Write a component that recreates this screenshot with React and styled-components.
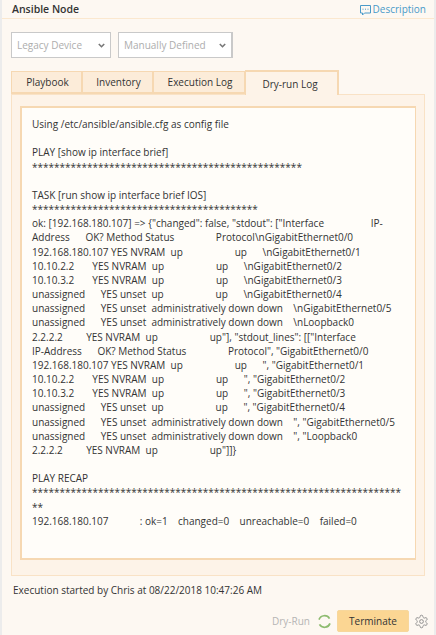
import React from "react";
import styled, { createGlobalStyle } from "styled-components";

const GlobalStyle = createGlobalStyle`
  html, body {
    margin: 0;
    padding: 0;
    background: #ececec;
  }
  * {
    box-sizing: border-box;
  }
`;

const Page = styled.div`
  width: 436px;
  height: 635px;
  padding: 0 2px;
  overflow: hidden;
  font-family: "Open Sans", "Liberation Sans", sans-serif;
  color: #2b2b2b;
`;

const Panel = styled.div`
  height: 100%;
  background: #fdf8f2;
  display: flex;
  flex-direction: column;
`;

const Header = styled.header`
  height: 19px;
  padding: 0 8px 0 10px;
  display: flex;
  justify-content: space-between;
  align-items: center;
  border-bottom: 1px solid #fbe8cf;
`;

const Title = styled.h1`
  margin: 0;
  font-size: 10.5px;
  font-weight: 600;
  color: #333;
`;

const DescriptionLink = styled.a`
  display: flex;
  align-items: center;
  gap: 2px;
  font-size: 10px;
  color: #4a9ac9;
`;

const Body = styled.div`
  padding: 13px 9px 0;
`;

const Filters = styled.div`
  display: flex;
  gap: 7px;
  margin-bottom: 13px;
`;

const SelectBox = styled.div`
  width: ${(props) => props.width}px;
  height: 26px;
  padding: 0 5px;
  display: flex;
  justify-content: space-between;
  align-items: center;
  background: #fff;
  border: 1px solid #c9c9c9;
  border-right-width: ${(props) => (props.$raised ? 2 : 1)}px;
  font-size: 10px;
  color: #adadad;
`;

const Tabs = styled.div`
  display: flex;
  height: 24px;
  align-items: flex-end;
  border-bottom: 1px solid #f9e2c6;
`;

const Tab = styled.div`
  width: ${(props) => props.width}px;
  height: ${(props) => (props.$active ? 25 : 23)}px;
  margin-bottom: ${(props) => (props.$active ? -1 : 0)}px;
  padding: ${(props) => (props.$active ? "0 3px 0 0" : "0 0 0 2px")};
  display: flex;
  justify-content: center;
  align-items: center;
  font-size: 10px;
  color: #333;
  background: ${(props) => (props.$active ? "#fdf3e8" : "#fcecd9")};
  border: 1px solid #f6d8b2;
  border-width: ${(props) => (props.$active ? "2px 2px 0 1px" : "1px 1px 2px 1px")};
`;

const TabPanel = styled.div`
  height: 481px;
  padding: 11px 8px 15px;
  background: #fdf3e8;
  border: 1px solid #f9e2c6;
  border-top: 0;
`;

const LogBox = styled.pre`
  height: 100%;
  margin: 0;
  padding: 9px 10px 0 10px;
  background: #fffdf9;
  border: 2px solid #f6d8b2;
  border-width: 2px 1px 2px 2px;
  font-family: inherit;
  font-size: 10px;
  line-height: 14.17px;
  color: #333;
  white-space: pre;
`;

const Status = styled.p`
  margin: 7px 0 0 2px;
  font-size: 10px;
  color: #333;
`;

const Footer = styled.footer`
  margin-top: auto;
  height: 28px;
  padding-right: 5px;
  display: flex;
  justify-content: flex-end;
  align-items: center;
`;

const Mode = styled.span`
  font-size: 10px;
  color: #b5b5b5;
  margin-right: 7px;
`;

const TerminateButton = styled.button`
  width: 72px;
  height: 22px;
  margin: 0 5px 0 5px;
  padding: 0;
  border: 1px solid #f7d79c;
  border-radius: 2px;
  background: #fbd693;
  font-family: inherit;
  font-size: 10px;
  color: #333;
`;

const Chevron = () => (
  <svg width="7" height="5" viewBox="0 0 7 5">
    <path d="M.8 1l2.7 2.7L6.2 1" fill="none" stroke="#777" strokeWidth="1.6" />
  </svg>
);

const CommentIcon = () => (
  <svg width="11" height="13" viewBox="0 0 11 13">
    <path d="M.5 2.5h10v7.5H4.5l-2 2V10h-2z" fill="none" stroke="#4a9ac9" strokeWidth="1" />
    <path d="M2.5 6.2h1M5 6.2h1M7.5 6.2h1" stroke="#4a9ac9" strokeWidth="1" />
  </svg>
);

const Spinner = () => (
  <svg width="15" height="15" viewBox="0 0 15 15">
    <path d="M2 5.6A5.8 5.8 0 0 1 12.5 4.6" fill="none" stroke="#8dbb6f" strokeWidth="1.7" />
    <path d="M13 9.4A5.8 5.8 0 0 1 2.5 10.4" fill="none" stroke="#8dbb6f" strokeWidth="1.7" />
  </svg>
);

const GearIcon = () => (
  <svg width="15" height="15" viewBox="0 0 24 24" fill="none" stroke="#8f8f8f" strokeWidth="1.6">
    <path d="M12.2 2h-.4a2 2 0 0 0-2 2v.2a2 2 0 0 1-1 1.7l-.4.3a2 2 0 0 1-2 0l-.2-.1a2 2 0 0 0-2.7.7l-.2.4a2 2 0 0 0 .7 2.7l.2.1a2 2 0 0 1 1 1.7v.6a2 2 0 0 1-1 1.7l-.2.1a2 2 0 0 0-.7 2.7l.2.4a2 2 0 0 0 2.7.7l.2-.1a2 2 0 0 1 2 0l.4.3a2 2 0 0 1 1 1.7v.2a2 2 0 0 0 2 2h.4a2 2 0 0 0 2-2v-.2a2 2 0 0 1 1-1.7l.4-.3a2 2 0 0 1 2 0l.2.1a2 2 0 0 0 2.7-.7l.2-.4a2 2 0 0 0-.7-2.7l-.2-.1a2 2 0 0 1-1-1.7v-.6a2 2 0 0 1 1-1.7l.2-.1a2 2 0 0 0 .7-2.7l-.2-.4a2 2 0 0 0-2.7-.7l-.2.1a2 2 0 0 1-2 0l-.4-.3a2 2 0 0 1-1-1.7V4a2 2 0 0 0-2-2z" />
    <circle cx="12" cy="12" r="3" />
  </svg>
);

const stars = (count) => "*".repeat(count);

// lines are broken where the reference log breaks them
const logText = `Using /etc/ansible/ansible.cfg as config file

PLAY [show ip interface brief]
${stars(49)}

TASK [run show ip interface brief IOS]
${stars(41)}
ok: [192.168.180.107] => {"changed": false, "stdout": ["Interface                  IP-
Address      OK? Method Status                Protocol\\nGigabitEthernet0/0
192.168.180.107 YES NVRAM  up                    up      \\nGigabitEthernet0/1
10.10.2.2       YES NVRAM  up                    up      \\nGigabitEthernet0/2
10.10.3.2       YES NVRAM  up                    up      \\nGigabitEthernet0/3
unassigned      YES unset  up                    up      \\nGigabitEthernet0/4
unassigned      YES unset  administratively down down    \\nGigabitEthernet0/5
unassigned      YES unset  administratively down down    \\nLoopback0
2.2.2.2         YES NVRAM  up                    up"], "stdout_lines": [["Interface
IP-Address      OK? Method Status                Protocol", "GigabitEthernet0/0
192.168.180.107 YES NVRAM  up                    up      ", "GigabitEthernet0/1
10.10.2.2       YES NVRAM  up                    up      ", "GigabitEthernet0/2
10.10.3.2       YES NVRAM  up                    up      ", "GigabitEthernet0/3
unassigned      YES unset  up                    up      ", "GigabitEthernet0/4
unassigned      YES unset  administratively down down    ", "GigabitEthernet0/5
unassigned      YES unset  administratively down down    ", "Loopback0
2.2.2.2         YES NVRAM  up                    up"]]}

PLAY RECAP
${stars(67)}
**
192.168.180.107            : ok=1    changed=0    unreachable=0    failed=0`;

const App = () => {
  return (
    <>
      <GlobalStyle />
      <Page>
        <Panel>
          <Header>
            <Title>Ansible Node</Title>
            <DescriptionLink>
              <CommentIcon />
              Description
            </DescriptionLink>
          </Header>
          <Body>
            <Filters>
              <SelectBox width={100}>
                Legacy Device
                <Chevron />
              </SelectBox>
              <SelectBox width={115} $raised>
                Manually Defined
                <Chevron />
              </SelectBox>
            </Filters>
            <Tabs>
              <Tab width={71}>Playbook</Tab>
              <Tab width={71}>Inventory</Tab>
              <Tab width={92}>Execution Log</Tab>
              <Tab width={94} $active>
                Dry-run Log
              </Tab>
            </Tabs>
            <TabPanel>
              <LogBox>{logText}</LogBox>
            </TabPanel>
            <Status>Execution started by Chris at 08/22/2018 10:47:26 AM</Status>
          </Body>
          <Footer>
            <Mode>Dry-Run</Mode>
            <Spinner />
            <TerminateButton>Terminate</TerminateButton>
            <GearIcon />
          </Footer>
        </Panel>
      </Page>
    </>
  );
};

export default App;
